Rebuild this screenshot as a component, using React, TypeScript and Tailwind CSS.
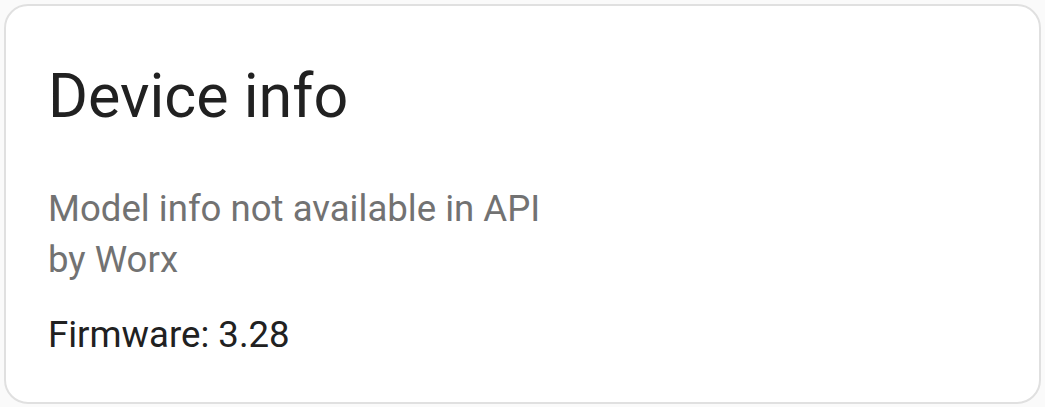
import React from 'react';

export default function App() {
  return (
    <div className="h-[407px] w-[1045px] bg-[#fafafa] p-1 font-['Roboto',sans-serif]">
      <div className="h-[400px] rounded-[24px] border-2 border-[#e0e0e0] bg-white px-[42px] pt-[54px]">
        <h1 className="text-[61px] leading-[72px] font-normal text-[#212121]">Device info</h1>
        <div className="mt-[51px] text-[36.6px] leading-[51px] text-[#727272]">
          <div>Model info not available in API</div>
          <div>by Worx</div>
        </div>
        <div className="mt-[24px] text-[36.6px] leading-[51px] text-[#212121]">Firmware: 3.28</div>
      </div>
    </div>
  );
}
